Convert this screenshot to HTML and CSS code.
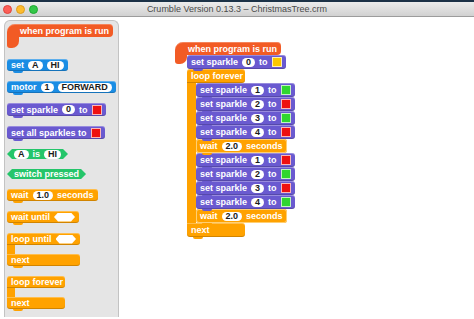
FILE: index.html
```html
<!DOCTYPE html>
<html lang="en">

<head>
  <meta charset="UTF-8">
  <meta name="viewport" content="width=device-width, initial-scale=1.0">
  <title>Crumble Version 0.13.3 – ChristmasTree.crm</title>
  <link rel="stylesheet" href="styles.css">
</head>

<body>
  <div class="top-strip"></div>
  <div class="titlebar">
    <div class="lights">
      <span class="light light-red"></span>
      <span class="light light-yellow"></span>
      <span class="light light-green"></span>
    </div>
    <div class="title">Crumble Version 0.13.3 – ChristmasTree.crm</div>
    <div></div>
  </div>

  <div class="workspace">
    <!-- 积木面板 -->
    <div class="palette">
      <div class="hat">when program is run</div>
      <div class="block cmd motor">set <span class="pill">A</span><span class="pill">HI</span></div>
      <div class="block cmd motor">motor <span class="pill">1</span><span class="pill">FORWARD</span></div>
      <div class="block cmd sparkle tall">set sparkle <span class="pill">0</span> to <span class="swatch red"></span></div>
      <div class="block cmd sparkle tall">set all sparkles to <span class="swatch red"></span></div>
      <div class="block hex sensor"><span class="pill">A</span> is <span class="pill">HI</span></div>
      <div class="block hex sensor">switch pressed</div>
      <div class="block cmd control">wait <span class="pill">1.0</span> seconds</div>
      <div class="block cmd control">wait until <span class="slot"></span></div>
      <div class="c-block">
        <div class="block control c-top loop-until">loop until <span class="slot"></span></div>
        <div class="c-body">
          <div class="c-arm"></div>
          <div class="c-inner empty"></div>
        </div>
        <div class="block cmd control c-bottom loop-until">next</div>
      </div>
      <div class="c-block">
        <div class="block control c-top loop-forever">loop forever</div>
        <div class="c-body">
          <div class="c-arm"></div>
          <div class="c-inner empty"></div>
        </div>
        <div class="block cmd control c-bottom loop-forever">next</div>
      </div>
    </div>

    <!-- 脚本区 -->
    <div class="canvas">
      <div class="script">
        <div class="hat">when program is run</div>
        <div class="stack">
          <div class="block cmd sparkle">set sparkle <span class="pill">0</span> to <span class="swatch yellow"></span></div>
          <div class="c-block">
            <div class="block control c-top loop-forever">loop forever</div>
            <div class="c-body">
              <div class="c-arm"></div>
              <div class="c-inner">
                <div class="block cmd sparkle">set sparkle <span class="pill">1</span> to <span class="swatch green"></span></div>
                <div class="block cmd sparkle">set sparkle <span class="pill">2</span> to <span class="swatch red"></span></div>
                <div class="block cmd sparkle">set sparkle <span class="pill">3</span> to <span class="swatch green"></span></div>
                <div class="block cmd sparkle">set sparkle <span class="pill">4</span> to <span class="swatch red"></span></div>
                <div class="block cmd control nested">wait <span class="pill">2.0</span> seconds</div>
                <div class="block cmd sparkle">set sparkle <span class="pill">1</span> to <span class="swatch red"></span></div>
                <div class="block cmd sparkle">set sparkle <span class="pill">2</span> to <span class="swatch green"></span></div>
                <div class="block cmd sparkle">set sparkle <span class="pill">3</span> to <span class="swatch red"></span></div>
                <div class="block cmd sparkle">set sparkle <span class="pill">4</span> to <span class="swatch green"></span></div>
                <div class="block cmd control nested">wait <span class="pill">2.0</span> seconds</div>
              </div>
            </div>
            <div class="block cmd control c-bottom loop-forever">next</div>
          </div>
        </div>
      </div>
    </div>
  </div>
</body>

</html>
```

FILE: styles.css
```css
body {
  margin: 0;
  width: 474px;
  height: 319px;
  overflow: hidden;
  background: #fff;
  font-family: "Liberation Sans", Arial, sans-serif;
}

.top-strip {
  height: 2px;
  background: #1c3247;
}

.titlebar {
  display: grid;
  grid-template-columns: 1fr auto 1fr;
  align-items: center;
  height: 14px;
  background: linear-gradient(#ececec, #d1d1d1);
  border-bottom: 1px solid #9c9c9c;
}

.lights {
  display: flex;
  gap: 4px;
  padding-left: 3px;
}

.light {
  width: 9px;
  height: 9px;
  box-sizing: border-box;
  border-radius: 50%;
  border: 1px solid;
}

.light-red {
  background: #fc5f57;
  border-color: #de443d;
}

.light-yellow {
  background: #fdbc2e;
  border-color: #dd9d21;
}

.light-green {
  background: #33c748;
  border-color: #1fa831;
}

.title {
  font-size: 9px;
  color: #4a4a4a;
}

.workspace {
  display: flex;
  align-items: flex-start;
  height: 302px;
}

.palette {
  display: flex;
  flex-direction: column;
  align-items: flex-start;
  gap: 10px;
  width: 115px;
  height: 297px;
  margin: 3px 0 0 4px;
  padding: 3px 0 0 2px;
  box-sizing: border-box;
  background: #e5e5e5;
  border: 1px solid #c3c3c3;
  border-bottom: none;
  border-radius: 6px 6px 0 0;
}

.canvas {
  position: relative;
  flex: 1;
  align-self: stretch;
}

/* 脚本在画布上的位置 */
.script {
  position: absolute;
  left: 56px;
  top: 25px;
  display: flex;
  flex-direction: column;
  align-items: flex-start;
}

.stack {
  display: flex;
  flex-direction: column;
  align-items: flex-start;
  margin-left: 12px;
}

/* 积木 */
.hat {
  position: relative;
  display: inline-flex;
  align-items: center;
  height: 13px;
  padding: 0 4px 0 13px;
  background: #f25b25;
  color: #fff;
  font-size: 9px;
  font-weight: bold;
  white-space: nowrap;
  border-radius: 8px 4px 4px 0;
  box-shadow: inset 0 1px rgba(255, 255, 255, .25);
}

.hat::after {
  content: "";
  position: absolute;
  left: 0;
  top: 13px;
  width: 12px;
  height: 9px;
  background: #f25b25;
  border-radius: 0 0 7px 3px;
}

.palette .hat {
  margin-bottom: 12px;
}

.palette .hat::after {
  height: 11px;
}

.block {
  position: relative;
  display: inline-flex;
  align-items: center;
  gap: 4px;
  height: 12px;
  padding: 0 4px;
  box-sizing: border-box;
  border-radius: 3px;
  color: #fff;
  font-size: 9px;
  font-weight: bold;
  white-space: nowrap;
  box-shadow: inset 0 1px rgba(255, 255, 255, .3), inset 0 -1px rgba(0, 0, 0, .18);
}

.block.tall {
  height: 13px;
}

.script .block {
  height: 14px;
}

/* 底部的小凸起 */
.cmd::after {
  content: "";
  position: absolute;
  left: 6px;
  bottom: -2px;
  width: 10px;
  height: 2px;
  background: inherit;
  border-radius: 0 0 3px 3px;
  z-index: 1;
}

.motor {
  background: #1a8de4;
}

.sparkle {
  background: #6a5ad0;
}

.control {
  background: #ffa200;
}

.sensor {
  background: #25c56a;
}

.hex {
  height: 10px;
  padding: 0 7px;
  border-radius: 0;
  box-shadow: none;
  clip-path: polygon(5px 0, calc(100% - 5px) 0, 100% 50%, calc(100% - 5px) 100%, 5px 100%, 0 50%);
}

.nested {
  box-shadow: inset 0 0 0 1px #ffcf73;
}

.pill {
  height: 9px;
  padding: 0 4px;
  line-height: 9px;
  border-radius: 5px;
  background: #fff;
  color: #1b1b1b;
  font-size: 9px;
}

.slot {
  width: 21px;
  height: 9px;
  background: #fff;
  clip-path: polygon(4px 0, calc(100% - 4px) 0, 100% 50%, calc(100% - 4px) 100%, 4px 100%, 0 50%);
}

.swatch {
  width: 10px;
  height: 10px;
  box-sizing: border-box;
  border: 1px solid rgba(255, 255, 255, .7);
}

.swatch.red {
  background: #ee1010;
}

.swatch.green {
  background: #2fd62f;
}

.swatch.yellow {
  background: #fcc800;
}

/* C 形循环积木 */
.c-block {
  display: flex;
  flex-direction: column;
  align-items: flex-start;
}

.c-top {
  border-radius: 3px 3px 3px 0;
}

.c-bottom {
  border-radius: 0 3px 3px 3px;
}

.c-body {
  display: flex;
}

.c-arm {
  width: 8px;
  background: #ffa200;
}

.script .c-arm {
  width: 9px;
}

.c-inner {
  display: flex;
  flex-direction: column;
  align-items: flex-start;
}

.c-inner.empty {
  height: 9px;
}

.loop-until {
  width: 73px;
}

.loop-forever {
  width: 58px;
}
```
